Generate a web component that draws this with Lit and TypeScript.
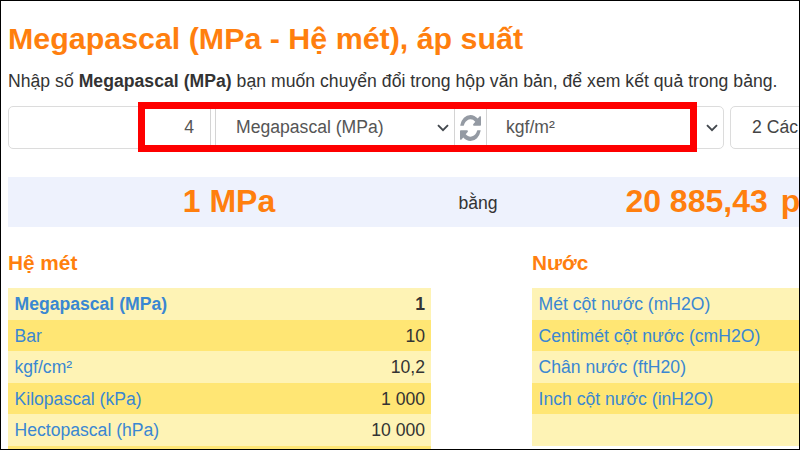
import { LitElement, html, css, svg } from "lit";
import { customElement } from "lit/decorators.js";

const metric: [string, string][] = [
  ["Megapascal (MPa)", "1"],
  ["Bar", "10"],
  ["kgf/cm²", "10,2"],
  ["Kilopascal (kPa)", "1 000"],
  ["Hectopascal (hPa)", "10 000"],
  ["Pascal (Pa)", "1 000 000"],
];
const water: [string, string][] = [
  ["Mét cột nước (mH2O)", ""],
  ["Centimét cột nước (cmH2O)", ""],
  ["Chân nước (ftH20)", ""],
  ["Inch cột nước (inH2O)", ""],
  ["", ""],
];

const chevron = svg`<svg class="chev" width="12" height="8" viewBox="0 0 12 8"><path d="M1 1.2 L6 6.2 L11 1.2" fill="none" stroke="#43484e" stroke-width="1.9"/></svg>`;

@customElement("app-root")
export class AppRoot extends LitElement {
  static styles = css`
    :host {
      display: block;
      position: relative;
      width: 800px;
      height: 450px;
      overflow: hidden;
      background: #fff;
      font-family: "Liberation Sans", Arial, sans-serif;
      font-size: 17.6px;
      color: #333;
    }
    .page {
      width: 1000px;
      padding: 20px 0 0 8px;
    }
    h1 {
      margin: 0;
      font-size: 30.4px;
      line-height: 37px;
      font-weight: 700;
      color: #ff7f0e;
    }
    .lead {
      margin: 13px 0 0;
      line-height: 22px;
      white-space: nowrap;
      letter-spacing: 0.03px;
    }
    .tools {
      display: flex;
      margin-top: 14px;
      height: 43px;
      gap: 6px;
    }
    .group {
      flex: none;
      width: 716px;
      display: flex;
      border: 1px solid #dcdcdc;
      border-radius: 5px;
      box-sizing: border-box;
    }
    .field {
      display: flex;
      align-items: center;
      box-sizing: border-box;
      border-right: 1px solid #d4d4d4;
      color: #555;
    }
    .num { width: 202px; justify-content: flex-end; padding-right: 16px; }
    .sel {
      width: 240px;
      justify-content: space-between;
      padding: 0 5px 0 20px;
      margin-left: 4px;
      border-left: 1px solid #d4d4d4;
    }
    .swap { width: 32px; justify-content: center; border-right: 1px solid #d4d4d4; }
    .sel2 { flex: 1; justify-content: space-between; padding: 0 5px 0 19px; border: 0; }
    .other {
      flex: none;
      width: 240px;
      display: flex;
      align-items: center;
      padding-left: 21px;
      box-sizing: border-box;
      border: 1px solid #dcdcdc;
      border-radius: 5px;
      color: #444;
      white-space: nowrap;
    }
    .band {
      display: grid;
      grid-template-columns: 442px 56px 442px;
      align-items: center;
      height: 50px;
      margin-top: 28px;
      background: #eef2fd;
      text-align: center;
    }
    .big { font-size: 32px; font-weight: 700; color: #ff7f0e; padding-bottom: 2px; white-space: nowrap; }
    .unit { margin-left: 4px; }
    .eq { white-space: nowrap; padding-top: 3px; }
    .cols {
      display: grid;
      grid-template-columns: 423px 400px;
      column-gap: 101px;
      margin-top: 24px;
    }
    h2 {
      margin: 0 0 12px;
      font-size: 20.8px;
      line-height: 24px;
      height: 24px;
      padding-bottom: 1px;
      font-weight: 700;
      color: #ff7f0e;
    }
    .row {
      display: flex;
      justify-content: space-between;
      height: 31.5px;
      line-height: 33px;
      padding: 0 6px 0 6.5px;
      background: #fef3b5;
      white-space: nowrap;
    }
    .row:nth-child(even) { background: #ffe674; }
    .row.strong { font-weight: 700; }
    .name { color: #3a87d2; }
    .val { color: #333; }
    .mark {
      position: absolute;
      left: 138px;
      top: 102px;
      width: 559px;
      height: 50px;
      box-sizing: border-box;
      border: 7px solid #fe0000;
    }
    .edge { position: absolute; background: #000; }
    .edge.l { left: 0; top: 0; bottom: 0; width: 1px; }
    .edge.t { left: 0; top: 0; right: 0; height: 1px; }
    .edge.r { right: 0; top: 0; bottom: 0; width: 1px; }
    .edge.b { left: 0; bottom: 0; right: 0; height: 1px; }
  `;

  private table(rows: [string, string][], first = false) {
    return html`<div>
      ${rows.map(
        ([n, v], i) => html`<div class="row ${first && i === 0 ? "strong" : ""}">
          <span class="name">${n}</span><span class="val">${v}</span>
        </div>`
      )}
    </div>`;
  }

  render() {
    return html`
      <div class="page">
        <h1>Megapascal (MPa - Hệ mét), áp suất</h1>
        <p class="lead">Nhập số <b>Megapascal (MPa)</b> bạn muốn chuyển đổi trong hộp văn bản, để xem kết quả trong bảng.</p>
        <div class="tools">
          <div class="group">
            <div class="field num">4</div>
            <div class="field sel">Megapascal (MPa)${chevron}</div>
            <div class="field swap">
              <svg width="21" height="26" viewBox="128 128 1536 1536" preserveAspectRatio="none" fill="#949aa3">
                <path d="M1639 1056q0 5-1 7-64 268-268 434.500t-478 166.500q-146 0-282.500-55t-243.500-157l-129 129q-19 19-45 19t-45-19-19-45v-448q0-26 19-45t45-19h448q26 0 45 19t19 45-19 45l-137 137q71 66 161 102t187 36q134 0 250-65t186-179q11-17 53-117 8-23 30-23h192q13 0 22.500 9.500t9.500 22.500zm25-800v448q0 26-19 45t-45 19h-448q-26 0-45-19t-19-45 19-45l138-138q-148-137-349-137-134 0-250 65t-186 179q-11 17-53 117-8 23-30 23h-199q-13 0-22.500-9.500t-9.500-22.500v-7q65-268 270-434.500t480-166.500q146 0 284 55.500t245 156.500l130-129q19-19 45-19t45 19 19 45z"/>
              </svg>
            </div>
            <div class="field sel2">kgf/m²${chevron}</div>
          </div>
          <div class="other">2 Các chữ số thập phân</div>
        </div>
        <div class="band">
          <div class="big">1 MPa</div>
          <div class="eq">bằng</div>
          <div class="big">20 885,43<span class="unit"> psf</span></div>
        </div>
        <div class="cols">
          <section><h2>Hệ mét</h2>${this.table(metric, true)}</section>
          <section><h2>Nước</h2>${this.table(water)}</section>
        </div>
      </div>
      <div class="mark"></div>
      <i class="edge l"></i><i class="edge t"></i><i class="edge r"></i><i class="edge b"></i>
    `;
  }
}
